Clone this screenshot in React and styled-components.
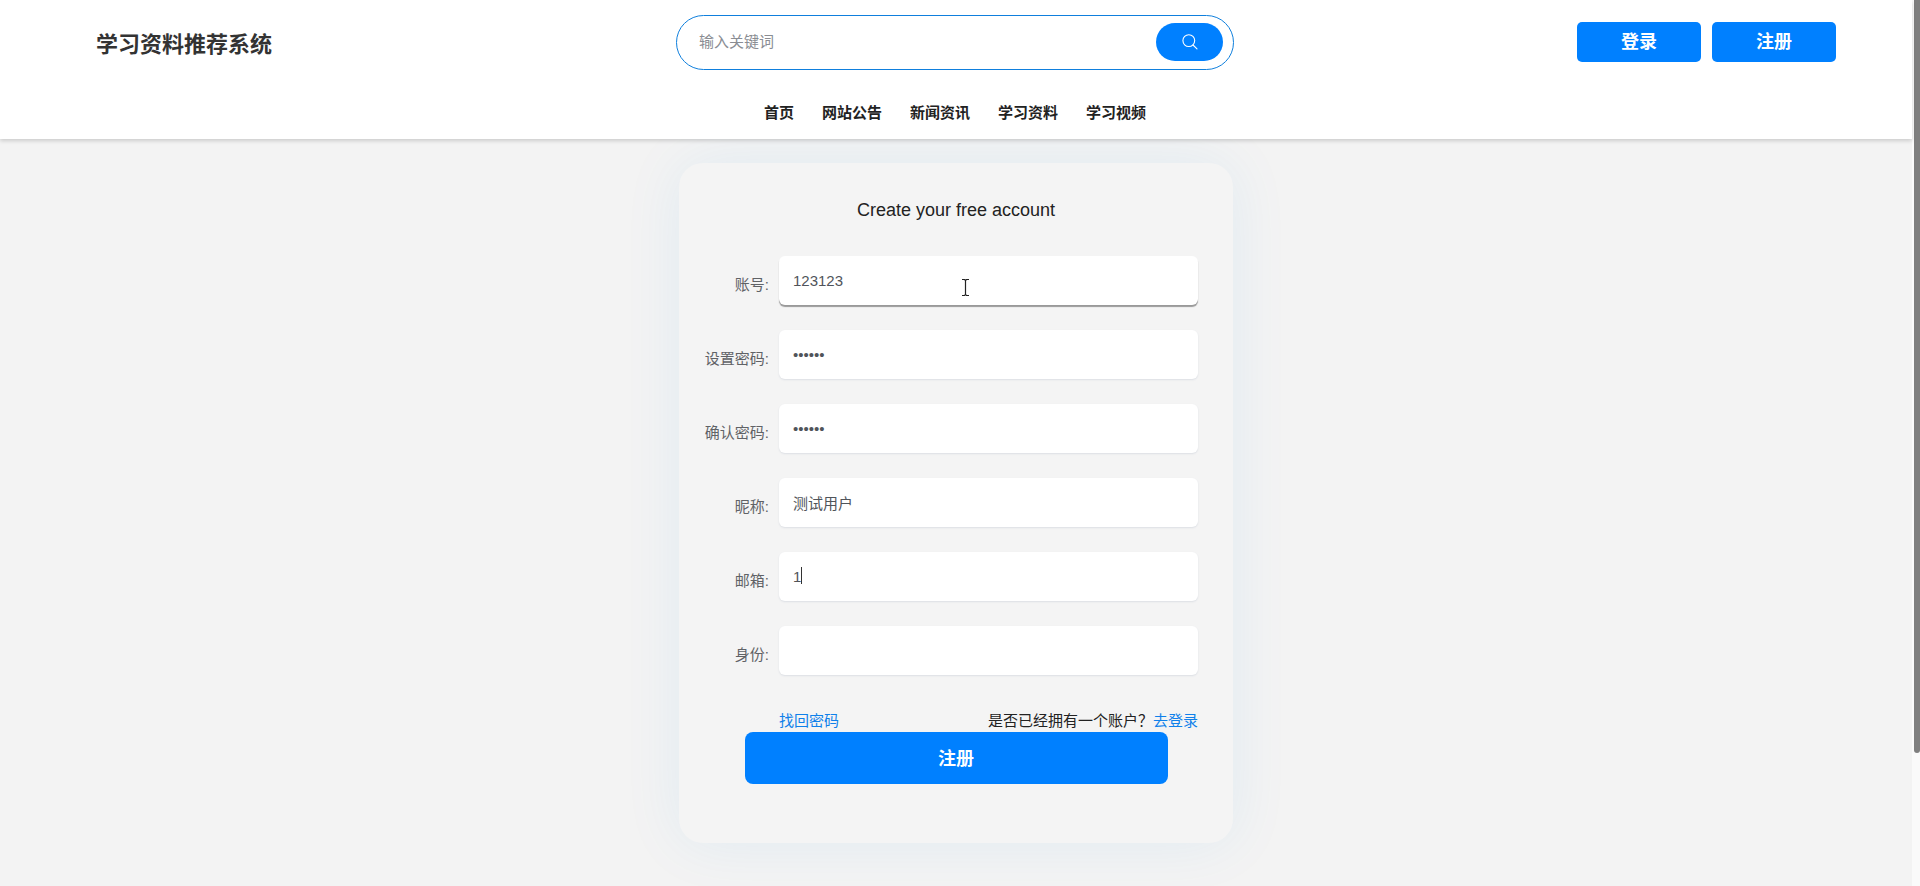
import React, { useState } from 'react'
import styled, { createGlobalStyle } from 'styled-components';

const navItems = ['首页', '网站公告', '新闻资讯', '学习资料', '学习视频'];

const fields = [
    { name: 'account', label: '账号', type: 'text' },
    { name: 'password', label: '设置密码', type: 'password' },
    { name: 'confirm', label: '确认密码', type: 'password' },
    { name: 'nickname', label: '昵称', type: 'text' },
    { name: 'email', label: '邮箱', type: 'text' },
    { name: 'role', label: '身份', type: 'text' },
];

function SearchIcon() {
    return (
        <svg width="16" height="16" viewBox="0 0 16 16" fill="none" stroke="#fff" strokeWidth="1.1" strokeLinecap="round">
            <circle cx="6.8" cy="6.6" r="5.9" />
            <path d="M11 11 L15 14.8" />
        </svg>
    )
}

function TextPointer() {
    return (
        <Pointer width="9" height="19" viewBox="0 0 9 19" fill="none" stroke="#222" strokeWidth="1.2">
            <path d="M1 1.5 H3.5 L4.5 2.5 L5.5 1.5 H8 M4.5 2.5 V16.5 M1 17.5 H3.5 L4.5 16.5 L5.5 17.5 H8" />
        </Pointer>
    )
}

function App() {
    const [values, setValues] = useState({
        account: '123123',
        password: '123123',
        confirm: '123123',
        nickname: '测试用户',
        email: '1',
        role: '',
    });

    const change = (e) => {
        setValues({ ...values, [e.target.name]: e.target.value })
    }

    return (
        <Layout>
            <GlobalStyle />
            <Page>
                <Header>
                    <TopBar>
                        <SiteName>学习资料推荐系统</SiteName>
                        <SearchBox>
                            <SearchInput type="text" placeholder="输入关键词" aria-label="输入关键词" />
                            <SearchButton type="button" aria-label="搜索">
                                <SearchIcon />
                            </SearchButton>
                        </SearchBox>
                        <HeaderActions>
                            <HeaderButton type="button">登录</HeaderButton>
                            <HeaderButton type="button">注册</HeaderButton>
                        </HeaderActions>
                    </TopBar>
                    <Nav>
                        {navItems.map(item => <NavLink key={item} href="#">{item}</NavLink>)}
                    </Nav>
                </Header>
                <Main>
                    <Card onSubmit={(e) => e.preventDefault()}>
                        <CardTitle>Create your free account</CardTitle>
                        {fields.map(field => (
                            <Row key={field.name}>
                                <Label htmlFor={field.name}>{field.label}:</Label>
                                <Control>
                                    <Input
                                        id={field.name}
                                        name={field.name}
                                        type={field.type}
                                        value={values[field.name]}
                                        onChange={change}
                                        autoComplete="off"
                                        $active={field.name === 'account'}
                                    />
                                    {field.name === 'account' && <TextPointer />}
                                    {field.name === 'email' && <Caret />}
                                </Control>
                            </Row>
                        ))}
                        <Links>
                            <TextLink href="#">找回密码</TextLink>
                            <span>是否已经拥有一个账户？<TextLink href="#">去登录</TextLink></span>
                        </Links>
                        <SubmitButton type="submit">注册</SubmitButton>
                    </Card>
                </Main>
            </Page>
            <ScrollTrack>
                <ScrollThumb />
            </ScrollTrack>
        </Layout>
    )
}

export default App;

const GlobalStyle = createGlobalStyle`
    * {
        box-sizing: border-box;
    }
    body {
        margin: 0;
        background-color: #f3f3f3;
        color: #222;
        font-family: "Liberation Sans", "Noto Sans CJK SC", sans-serif;
        font-size: 15px;
    }
    input, button {
        font-family: inherit;
    }
`

const Layout = styled.div`
    display: flex;
    min-height: 100vh;
`

const Page = styled.div`
    flex: 1;
    display: flex;
    flex-direction: column;
`

const Header = styled.header`
    height: 139px;
    padding: 15px 76px 0 74px;
    background-color: white;
    box-shadow: 0 2px 4px rgba(0,0,0,0.16);
    z-index: 1;
`

const TopBar = styled.div`
    display: grid;
    grid-template-columns: 1fr 558px 1fr;
    align-items: center;
`

const SiteName = styled.h1`
    margin: 0;
    padding: 0 0 2px 22px;
    color: #333;
    font-size: 22px;
    font-weight: 700;
`

const SearchBox = styled.div`
    height: 55px;
    display: flex;
    align-items: center;
    padding: 0 10px 2px 22px;
    border: 1px solid #0f7fdd;
    border-radius: 28px;
`

const SearchInput = styled.input`
    flex: 1;
    padding: 0;
    border: none;
    outline: none;
    background: none;
    font-size: 15px;
    &::placeholder {
        color: #8a8d93;
    }
`

const SearchButton = styled.button`
    width: 67px;
    height: 38px;
    display: flex;
    align-items: center;
    justify-content: center;
    border: none;
    border-radius: 20px;
    background-color: #0080ff;
    cursor: pointer;
`

const HeaderActions = styled.div`
    display: flex;
    justify-content: flex-end;
    gap: 11px;
    padding-bottom: 2px;
`

const HeaderButton = styled.button`
    width: 124px;
    height: 40px;
    padding: 0 0 4px;
    border: none;
    border-radius: 5px;
    background-color: #0080ff;
    color: white;
    font-size: 18px;
    font-weight: 700;
    cursor: pointer;
`

const Nav = styled.nav`
    display: flex;
    justify-content: center;
    gap: 28px;
    margin-top: 32px;
`

const NavLink = styled.a`
    color: #222;
    font-size: 15px;
    font-weight: 700;
    line-height: 22px;
    text-decoration: none;
`

const Main = styled.main`
    flex: 1;
    display: flex;
    justify-content: center;
    align-items: flex-start;
    padding: 24px 0 44px;
`

const Card = styled.form`
    width: 554px;
    display: flex;
    flex-direction: column;
    padding: 35px 0 59px;
    border-radius: 24px;
    background-color: #f4f4f4;
    box-shadow: 0 0 60px rgba(0,140,230,0.08);
`

const CardTitle = styled.h2`
    margin: 0 0 34px;
    font-size: 18px;
    font-weight: 400;
    line-height: 24px;
    text-align: center;
`

const Row = styled.div`
    display: grid;
    grid-template-columns: 70px 1fr;
    column-gap: 10px;
    margin-bottom: 25px;
    padding: 0 35px 0 20px;
`

const Label = styled.label`
    color: #606266;
    line-height: 58px;
    height: 49px;
    text-align: right;
`

const Control = styled.div`
    position: relative;
`

const Input = styled.input`
    display: block;
    width: 100%;
    height: 49px;
    padding: 0 14px;
    border: none;
    border-radius: 6px;
    outline: none;
    background-color: white;
    box-shadow: ${props => props.$active ? '0 2px 1px #999' : '0 1px 2px #dcdfe4'};
    color: #50545a;
    font-size: 15px;
`

const Caret = styled.span`
    position: absolute;
    top: 15px;
    left: 22px;
    width: 1px;
    height: 17px;
    background-color: #333;
`

const Pointer = styled.svg`
    position: absolute;
    top: 22px;
    left: 182px;
`

const Links = styled.div`
    display: flex;
    justify-content: space-between;
    margin-top: 10px;
    padding: 0 35px 0 100px;
    line-height: 22px;
`

const TextLink = styled.a`
    color: #0f80ea;
    text-decoration: none;
`

const SubmitButton = styled.button`
    width: 423px;
    height: 52px;
    margin: 0 auto;
    padding: 0 0 3px;
    border: none;
    border-radius: 8px;
    background-color: #0080ff;
    color: white;
    font-size: 18px;
    font-weight: 700;
    cursor: pointer;
`

const ScrollTrack = styled.div`
    width: 8px;
    display: flex;
    justify-content: flex-end;
    background-color: #fafafa;
`

const ScrollThumb = styled.div`
    width: 6px;
    height: 85vh;
    border-radius: 0 0 3px 3px;
    background-color: #7f7f7f;
`
